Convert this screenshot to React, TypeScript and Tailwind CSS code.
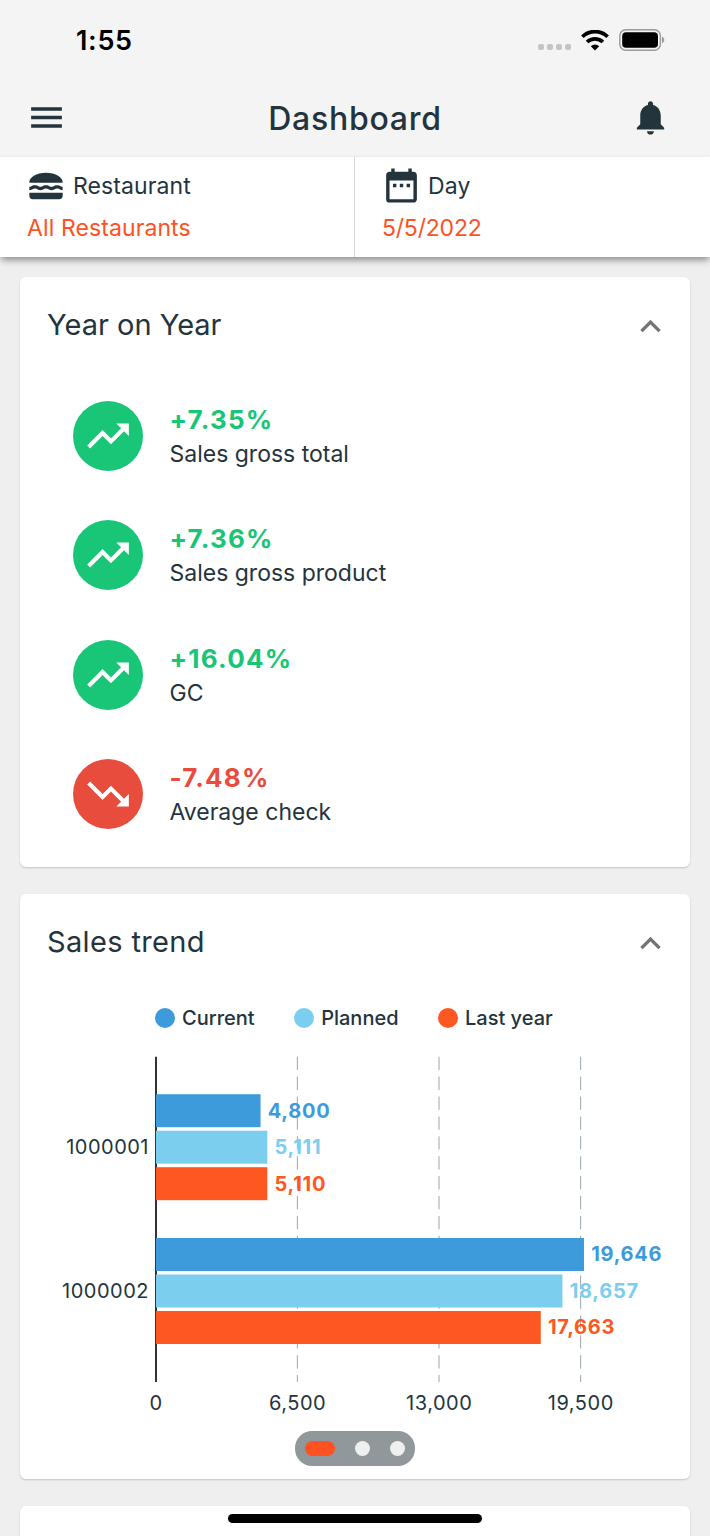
import React from 'react';
import clsx from 'clsx';
import {
  MdDateRange,
  MdKeyboardArrowUp,
  MdLunchDining,
  MdMenu,
  MdNotifications,
  MdTrendingDown,
  MdTrendingUp,
} from 'react-icons/md';

interface Metric {
  value: string;
  label: string;
  up: boolean;
}

const METRICS: Metric[] = [
  { value: '+7.35%', label: 'Sales gross total', up: true },
  { value: '+7.36%', label: 'Sales gross product', up: true },
  { value: '+16.04%', label: 'GC', up: true },
  { value: '-7.48%', label: 'Average check', up: false },
];

const SERIES = [
  { name: 'Current', color: '#3d9bdc' },
  { name: 'Planned', color: '#7bceee' },
  { name: 'Last year', color: '#ff5722' },
];

const GROUPS = [
  { id: '1000001', values: [4800, 5111, 5110] },
  { id: '1000002', values: [19646, 18657, 17663] },
];

const TICKS = [0, 6500, 13000, 19500];

function StatusBar() {
  return (
    <div className="flex h-20 items-center justify-between pl-[76px] pr-[45px]">
      <span className="mt-px text-[27px] font-semibold leading-none tracking-[0.7px] text-black">1:55</span>
      <div className="flex items-center">
        <div className="mr-[10px] mt-[14px] flex gap-[3px]">
          {[0, 1, 2, 3].map((i) => (
            <span key={i} className="size-[6px] rounded-[2px] bg-[#c4c4c4]" />
          ))}
        </div>
        <svg width="28" height="21" viewBox="0 0 28 21" className="mr-[10px]">
          <g fill="none" stroke="#000" strokeWidth="3.7">
            <path d="M1.4 6.7 A18 18 0 0 1 26.6 6.7" />
            <path d="M6.1 12 A11.3 11.3 0 0 1 21.9 12" />
          </g>
          <path d="M14 20.5 L9.8 16.2 A6.2 6.2 0 0 1 18.2 16.2 Z" />
        </svg>
        <svg width="46" height="22" viewBox="0 0 46 22">
          <rect x="0.8" y="0.8" width="40.6" height="20.4" rx="6" fill="none" stroke="#9b9b9b" strokeWidth="1.4" />
          <rect x="3.2" y="3.2" width="35.8" height="15.6" rx="3.8" />
          <path d="M43 7.8 C46 8.8 46 13.2 43 14.2 Z" fill="#9b9b9b" />
        </svg>
      </div>
    </div>
  );
}

function Header() {
  return (
    <header className="grid h-[77px] grid-cols-[80px_1fr_80px] items-center">
      <MdMenu size={41} className="mb-[2px] ml-[26px]" />
      <h1 className="text-center text-[32px] font-medium leading-none tracking-[0.75px]">Dashboard</h1>
      <MdNotifications size={41} className="mb-[2px]" />
    </header>
  );
}

interface FilterProps {
  icon: React.ReactNode;
  label: string;
  value: string;
  className?: string;
  valueClassName?: string;
}

function Filter({ icon, label, value, className, valueClassName }: FilterProps) {
  return (
    <div className={clsx('flex h-[100px] w-1/2 flex-col pl-[27px] pt-[7px]', className)}>
      <div className="flex h-[43px] items-center gap-[6px] text-[23px] tracking-[0.1px]">
        {icon}
        <span className="mt-px">{label}</span>
      </div>
      <span className={clsx('mt-[7px] text-[23px] leading-7 text-[#ff5122]', valueClassName)}>{value}</span>
    </div>
  );
}

function CardTitle({ children, className }: { children: React.ReactNode; className?: string }) {
  return (
    <div className="flex h-[95px] items-center justify-between pl-[27px] pr-[19px]">
      <h2 className={clsx('text-[29px] leading-none', className)}>{children}</h2>
      <MdKeyboardArrowUp size={41} className="mt-1 text-[#757575]" />
    </div>
  );
}

function MetricRow({ value, label, up }: Metric) {
  const Icon = up ? MdTrendingUp : MdTrendingDown;
  return (
    <li className="flex h-[70px] items-center gap-[26.5px]">
      <span
        className={clsx(
          'flex size-[70px] items-center justify-center rounded-full text-white',
          up ? 'bg-[#19c576]' : 'bg-[#e74c3c]',
        )}
      >
        <Icon size={50} />
      </span>
      <div className="flex flex-col pt-[2px]">
        <span
          className={clsx(
            'text-[26px] font-bold leading-[34px] tracking-[1.2px]',
            up ? 'text-[#19c576]' : 'text-[#e74c3c]',
          )}
        >
          {value}
        </span>
        <span className="text-[23px] leading-[34px]">{label}</span>
      </div>
    </li>
  );
}

function TrendChart() {
  const originX = 136;
  const top = 5.7;
  const bottom = 331;
  const scale = 141.6 / 6500;

  return (
    <svg width="670" height="370" viewBox="0 0 670 370" className="text-[20px] tracking-[0.5px]">
      {TICKS.slice(1).map((tick) => (
        <line
          key={tick}
          x1={originX - 0.2 + tick * scale}
          x2={originX - 0.2 + tick * scale}
          y1={top}
          y2={bottom}
          stroke="#a0b0b7"
          strokeWidth="1.1"
          strokeDasharray="13.3 6.6"
        />
      ))}
      <line x1={originX} x2={originX} y1={top} y2={bottom} stroke="#333" strokeWidth="2" />
      {GROUPS.map((group, g) => (
        <g key={group.id}>
          <text x="129" y={103 + g * 143.8} textAnchor="end" fill="#24343d">
            {group.id}
          </text>
          {group.values.map((value, i) => {
            const y = 43.2 + g * 143.8 + i * 36.5;
            const end = originX + value * scale;
            return (
              <g key={SERIES[i].name} fill={SERIES[i].color}>
                <rect x={originX} y={y} width={end - originX} height="33" />
                <text x={end + 7.2} y={y + 23.4} fontWeight="700" className="tracking-[0.75px]">
                  {value.toLocaleString('en-US')}
                </text>
              </g>
            );
          })}
        </g>
      ))}
      {TICKS.map((tick) => (
        <text key={tick} x={originX + tick * scale} y="359" textAnchor="middle" fill="#24343d">
          {tick.toLocaleString('en-US')}
        </text>
      ))}
    </svg>
  );
}

function Pager() {
  return (
    <div className="mx-auto flex h-[35px] w-[120px] items-center rounded-[17px] bg-[#90989b] pl-[10px]">
      <span className="h-[15px] w-[30px] rounded-full bg-[#ff5122]" />
      <span className="ml-5 size-[15px] rounded-full bg-[#efefef]" />
      <span className="ml-5 size-[15px] rounded-full bg-[#efefef]" />
    </div>
  );
}

export default function App() {
  const card = 'shrink-0 rounded-md bg-white shadow-[0_1px_2px_rgba(0,0,0,0.18)]';

  return (
    <div className="relative flex h-[1536px] w-[710px] flex-col overflow-hidden bg-[#efefef] font-['Inter','Liberation_Sans',sans-serif] text-[#24343d]">
      <div className="shrink-0 bg-[#f4f4f4]">
        <StatusBar />
        <Header />
      </div>
      <div className="flex shrink-0 bg-white shadow-[0_4px_7px_-1px_rgba(0,0,0,0.42)]">
        <Filter
          icon={<MdLunchDining size={40} className="-ml-px mr-px" />}
          label="Restaurant"
          value="All Restaurants"
          className="border-r border-[#d3d7d9]"
          valueClassName="tracking-[0.1px]"
        />
        <Filter
          icon={<MdDateRange size={41} className="-ml-px" />}
          label="Day"
          value="5/5/2022"
          valueClassName="tracking-[-0.2px]"
        />
      </div>

      <main className="flex flex-col gap-[27px] px-5 pt-5">
        <section className={clsx(card, 'h-[590px]')}>
          <CardTitle>Year on Year</CardTitle>
          <ul className="flex flex-col gap-[49.4px] pl-[53px] pt-[29px]">
            {METRICS.map((metric) => (
              <MetricRow key={metric.label} {...metric} />
            ))}
          </ul>
        </section>

        <section className={clsx(card, 'h-[585px]')}>
          <CardTitle className="tracking-[0.35px]">Sales trend</CardTitle>
          <div className="mt-[15px] flex h-7 items-center gap-[39.5px] pl-[135px] text-[20px] font-medium">
            {SERIES.map((series) => (
              <div key={series.name} className="flex items-center gap-[7px]">
                <span className="size-5 rounded-full" style={{ backgroundColor: series.color }} />
                <span>{series.name}</span>
              </div>
            ))}
          </div>
          <div className="mt-[19px] flex flex-col">
            <TrendChart />
            <div className="mt-[10px] flex">
              <Pager />
            </div>
          </div>
        </section>

        <section className={clsx(card, 'h-40')} />
      </main>

      {/* Home indicator */}
      <div className="absolute bottom-[13px] left-[228px] h-[9px] w-[254px] rounded-full bg-black" />
    </div>
  );
}
